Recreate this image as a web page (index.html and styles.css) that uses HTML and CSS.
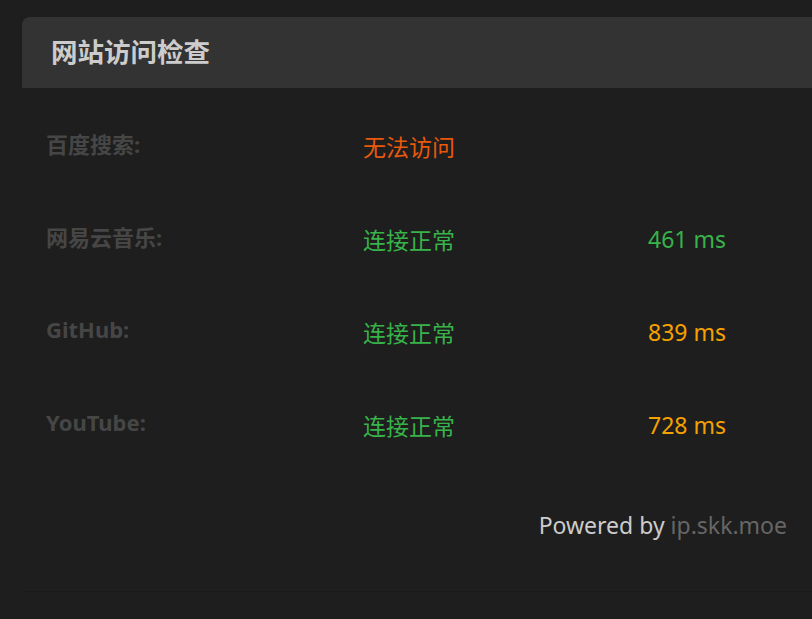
FILE: index.html
```html
<!DOCTYPE html>
<html lang="zh-CN">
<head>
<meta charset="utf-8">
<title>网站访问检查</title>
<link rel="stylesheet" href="styles.css">
</head>
<body>
<div class="page">
  <section class="card">
    <header class="card-head">
      <h2 class="card-title">网站访问检查</h2>
    </header>
    <div class="rows">
      <div class="row">
        <span class="label">百度搜索:</span>
        <span class="status bad">无法访问</span>
        <span class="time"></span>
      </div>
      <div class="row">
        <span class="label">网易云音乐:</span>
        <span class="status ok">连接正常</span>
        <span class="time fast">461 ms</span>
      </div>
      <div class="row">
        <span class="label">GitHub:</span>
        <span class="status ok">连接正常</span>
        <span class="time slow">839 ms</span>
      </div>
      <div class="row">
        <span class="label">YouTube:</span>
        <span class="status ok">连接正常</span>
        <span class="time slow">728 ms</span>
      </div>
    </div>
    <footer class="card-foot">
      <span class="powered">Powered by</span> <span class="site">ip.skk.moe</span>
    </footer>
  </section>
</div>
</body>
</html>
```

FILE: styles.css
```css
html, body {
  margin: 0;
  padding: 0;
  background: #1e1e1e;
  overflow: hidden;
}

body {
  font-family: "Noto Sans", "Noto Sans CJK SC", sans-serif;
  width: 812px;
  height: 619px;
}

.page {
  padding: 17px 0 0 22px;
}

.card {
  width: 810px;
  background: #1e1e1e;
  border-top-left-radius: 8px;
  box-shadow: 0 1px 0 #1a1a1a;
}

.card-head {
  background: #333333;
  height: 71px;
  display: flex;
  align-items: center;
  padding-left: 29px;
  border-top-left-radius: 8px;
}

.card-title {
  margin: 0;
  font-family: "Noto Sans CJK SC", sans-serif;
  font-size: 26.5px;
  font-weight: 700;
  color: #cccccc;
  line-height: 1;
  position: relative;
  top: -1px;
}

.rows {
  padding: 12px 0 0 24px;
}

.row {
  display: grid;
  grid-template-columns: 317px 285px auto;
  align-items: center;
  height: 93px;
}

.label {
  font-size: 22px;
  font-weight: 700;
  color: #464646;
  position: relative;
  top: -4px;
}

.status, .time {
  font-size: 23px;
  position: relative;
  top: -1px;
}

.bad { color: #e8590c; }
.ok { color: #37b34a; }
.fast { color: #37b34a; }
.slow { color: #f5a100; }

.card-foot {
  margin-top: 38px;
  padding: 0 45px 51px 0;
  text-align: right;
  font-size: 23px;
  line-height: 30px;
}

.powered { color: #cccccc; }
.site { color: #666666; }
```
